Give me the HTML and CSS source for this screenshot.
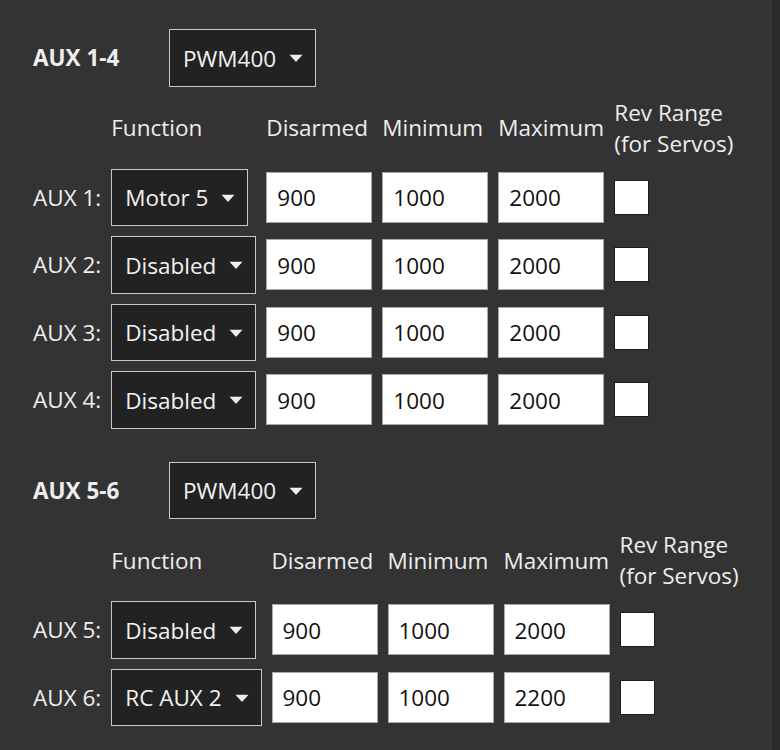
FILE: index.html
```html
<!DOCTYPE html>
<html lang="en">
<head>
  <meta charset="UTF-8">
  <meta name="viewport" content="width=device-width, initial-scale=1.0">
  <title>AUX Outputs</title>
  <link rel="stylesheet" href="styles.css">
</head>
<body>
  <div class="page">
    <!-- AUX 1-4 group -->
    <section class="aux-group">
      <div class="group-head">
        <span class="group-name">AUX 1-4</span>
        <div class="select"><span>PWM400</span><svg width="14" height="8" viewBox="0 0 14 8"><path d="M0.5 0.8h13l-5.6 6.2a1.2 1.2 0 0 1-1.8 0z" fill="#eee"/></svg></div>
      </div>
      <table class="aux-table">
        <tr>
          <th></th>
          <th>Function</th>
          <th>Disarmed</th>
          <th>Minimum</th>
          <th>Maximum</th>
          <th>Rev Range<br>(for Servos)</th>
        </tr>
        <tr>
          <td class="aux-name">AUX 1:</td>
          <td><div class="select"><span>Motor 5</span><svg width="14" height="8" viewBox="0 0 14 8"><path d="M0.5 0.8h13l-5.6 6.2a1.2 1.2 0 0 1-1.8 0z" fill="#eee"/></svg></div></td>
          <td><input class="num" type="text" value="900"></td>
          <td><input class="num" type="text" value="1000"></td>
          <td><input class="num" type="text" value="2000"></td>
          <td><input class="rev" type="checkbox"></td>
        </tr>
        <tr>
          <td class="aux-name">AUX 2:</td>
          <td><div class="select"><span>Disabled</span><svg width="14" height="8" viewBox="0 0 14 8"><path d="M0.5 0.8h13l-5.6 6.2a1.2 1.2 0 0 1-1.8 0z" fill="#eee"/></svg></div></td>
          <td><input class="num" type="text" value="900"></td>
          <td><input class="num" type="text" value="1000"></td>
          <td><input class="num" type="text" value="2000"></td>
          <td><input class="rev" type="checkbox"></td>
        </tr>
        <tr>
          <td class="aux-name">AUX 3:</td>
          <td><div class="select"><span>Disabled</span><svg width="14" height="8" viewBox="0 0 14 8"><path d="M0.5 0.8h13l-5.6 6.2a1.2 1.2 0 0 1-1.8 0z" fill="#eee"/></svg></div></td>
          <td><input class="num" type="text" value="900"></td>
          <td><input class="num" type="text" value="1000"></td>
          <td><input class="num" type="text" value="2000"></td>
          <td><input class="rev" type="checkbox"></td>
        </tr>
        <tr>
          <td class="aux-name">AUX 4:</td>
          <td><div class="select"><span>Disabled</span><svg width="14" height="8" viewBox="0 0 14 8"><path d="M0.5 0.8h13l-5.6 6.2a1.2 1.2 0 0 1-1.8 0z" fill="#eee"/></svg></div></td>
          <td><input class="num" type="text" value="900"></td>
          <td><input class="num" type="text" value="1000"></td>
          <td><input class="num" type="text" value="2000"></td>
          <td><input class="rev" type="checkbox"></td>
        </tr>
      </table>
    </section>

    <!-- AUX 5-6 group -->
    <section class="aux-group">
      <div class="group-head">
        <span class="group-name">AUX 5-6</span>
        <div class="select"><span>PWM400</span><svg width="14" height="8" viewBox="0 0 14 8"><path d="M0.5 0.8h13l-5.6 6.2a1.2 1.2 0 0 1-1.8 0z" fill="#eee"/></svg></div>
      </div>
      <table class="aux-table">
        <tr>
          <th></th>
          <th>Function</th>
          <th>Disarmed</th>
          <th>Minimum</th>
          <th>Maximum</th>
          <th>Rev Range<br>(for Servos)</th>
        </tr>
        <tr>
          <td class="aux-name">AUX 5:</td>
          <td><div class="select"><span>Disabled</span><svg width="14" height="8" viewBox="0 0 14 8"><path d="M0.5 0.8h13l-5.6 6.2a1.2 1.2 0 0 1-1.8 0z" fill="#eee"/></svg></div></td>
          <td><input class="num" type="text" value="900"></td>
          <td><input class="num" type="text" value="1000"></td>
          <td><input class="num" type="text" value="2000"></td>
          <td><input class="rev" type="checkbox"></td>
        </tr>
        <tr>
          <td class="aux-name">AUX 6:</td>
          <td><div class="select"><span>RC AUX 2</span><svg width="14" height="8" viewBox="0 0 14 8"><path d="M0.5 0.8h13l-5.6 6.2a1.2 1.2 0 0 1-1.8 0z" fill="#eee"/></svg></div></td>
          <td><input class="num" type="text" value="900"></td>
          <td><input class="num" type="text" value="1000"></td>
          <td><input class="num" type="text" value="2200"></td>
          <td><input class="rev" type="checkbox"></td>
        </tr>
      </table>
    </section>
  </div>
</body>
</html>
```

FILE: styles.css
```css
body {
  margin: 0;
  background-color: #2a2a2a;
  font-family: "Open Sans", "Noto Sans", sans-serif;
  font-size: 22.5px;
  color: #eeeeee;
}

.page {
  width: 772px;
  min-height: 750px;
  box-sizing: border-box;
  padding: 29px 0 0 33px;
  background-color: #333333;
}

.aux-group + .aux-group {
  margin-top: 23px;
}

.group-head {
  display: flex;
  align-items: center;
}

.group-name {
  width: 136px;
  font-weight: 700;
}

.select {
  display: flex;
  align-items: center;
  gap: 13px;
  width: max-content;
  height: 57.5px;
  box-sizing: border-box;
  padding: 1px 12px 0 13px;
  background-color: #222222;
  border: 1px solid #c8c8c8;
  color: #f2f2f2;
}

.select svg {
  display: block;
}

.aux-table {
  border-collapse: separate;
  border-spacing: 10px;
  margin-left: -10px;
}

.aux-table th {
  padding: 0;
  font-weight: 400;
  text-align: left;
  line-height: 31px;
  vertical-align: middle;
}

.aux-table td {
  padding: 0;
  vertical-align: middle;
}

.aux-name {
  white-space: nowrap;
}

.num {
  display: block;
  width: 106px;
  height: 51px;
  box-sizing: border-box;
  margin: 0;
  padding: 1px 0 0 10px;
  border: 1px solid #a8a8a8;
  background-color: #ffffff;
  color: #111111;
  font-family: inherit;
  font-size: 22.5px;
  outline: none;
}

.rev {
  display: block;
  appearance: none;
  -webkit-appearance: none;
  width: 35px;
  height: 35px;
  margin: 0;
  border: 1px solid #1c1c1c;
  background-color: #ffffff;
}
```
